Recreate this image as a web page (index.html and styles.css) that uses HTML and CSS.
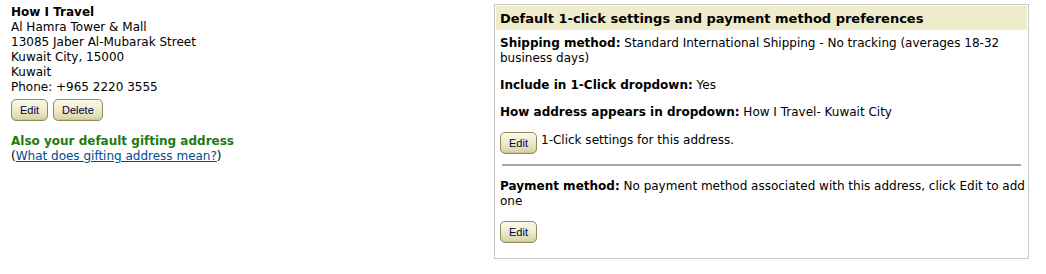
FILE: index.html
```html
<!DOCTYPE html>
<html>
<head>
<meta charset="utf-8">
<link rel="stylesheet" href="styles.css">
</head>
<body>
<div class="page">
  <div class="address">
    <div class="name">How I Travel</div>
    <div>Al Hamra Tower &amp; Mall</div>
    <div>13085 Jaber Al-Mubarak Street</div>
    <div>Kuwait City, 15000</div>
    <div>Kuwait</div>
    <div>Phone: +965 2220 3555</div>
    <div class="btns">
      <span class="btn">Edit</span>
      <span class="btn">Delete</span>
    </div>
    <div class="gift">Also your default gifting address</div>
    <div>(<a class="link" href="#">What does gifting address mean?</a>)</div>
  </div>
  <div class="box">
    <div class="box-head">Default 1-click settings and payment method preferences</div>
    <div class="box-body">
      <p class="row"><b>Shipping method:</b> Standard International Shipping - No tracking (averages 18-32 business days)</p>
      <p class="row"><b>Include in 1-Click dropdown:</b> Yes</p>
      <p class="row"><b>How address appears in dropdown:</b> How I Travel- Kuwait City</p>
      <div class="edit-row"><span class="btn btn-sm">Edit</span><span class="edit-note">1-Click settings for this address.</span></div>
      <div class="sep"></div>
      <p class="row"><b>Payment method:</b> No payment method associated with this address, click Edit to add one</p>
      <div class="edit-row"><span class="btn btn-sm">Edit</span></div>
    </div>
  </div>
</div>
</body>
</html>
```
FILE: styles.css
```css
html, body { margin: 0; padding: 0; background: #fff; }
body {
  font-family: "DejaVu Sans", Verdana, sans-serif;
  font-size: 12px;
  line-height: 15px;
  color: #000;
}
.page {
  display: flex;
  align-items: flex-start;
  padding: 4px 0 0 11px;
}
.address { width: 483px; padding-top: 1px; }
.name { font-weight: bold; }
.btns { display: flex; gap: 5px; margin: 4px 0 13px; }
.btn {
  display: inline-flex;
  align-items: center;
  justify-content: center;
  box-sizing: border-box;
  height: 22px;
  padding: 0 8px;
  border: 1px solid #8f8c5e;
  border-radius: 5px;
  background: linear-gradient(#fbf9e8 0%, #f0edcf 45%, #d6d2a4 100%);
  font-family: "Liberation Sans", Arial, sans-serif;
  font-size: 11px;
  color: #000040;
  box-shadow: inset 0 -1px 0 #c9c596;
}
.gift { color: #1f7a0c; font-weight: bold; }
.link { color: #004b91; }
.box {
  width: 535px;
  box-sizing: border-box;
  border: 1px solid #c9c9c9;
  padding: 1px;
  height: 255px;
}
.box-head {
  background: #eeeccb;
  font-weight: bold;
  font-size: 13px;
  line-height: 23px;
  padding: 1px 4px 0;
}
.box-body { padding: 6px 0 0 4px; }
.row { margin: 0 0 12px; }
.edit-row { display: flex; align-items: flex-start; gap: 4px; }
.edit-note { margin-top: 1px; }
.btn-sm { width: 37px; padding: 0; }
.sep { height: 0; border-top: 2px solid #aaa4a4; margin: 10px 6px 13px 2px; }
```
